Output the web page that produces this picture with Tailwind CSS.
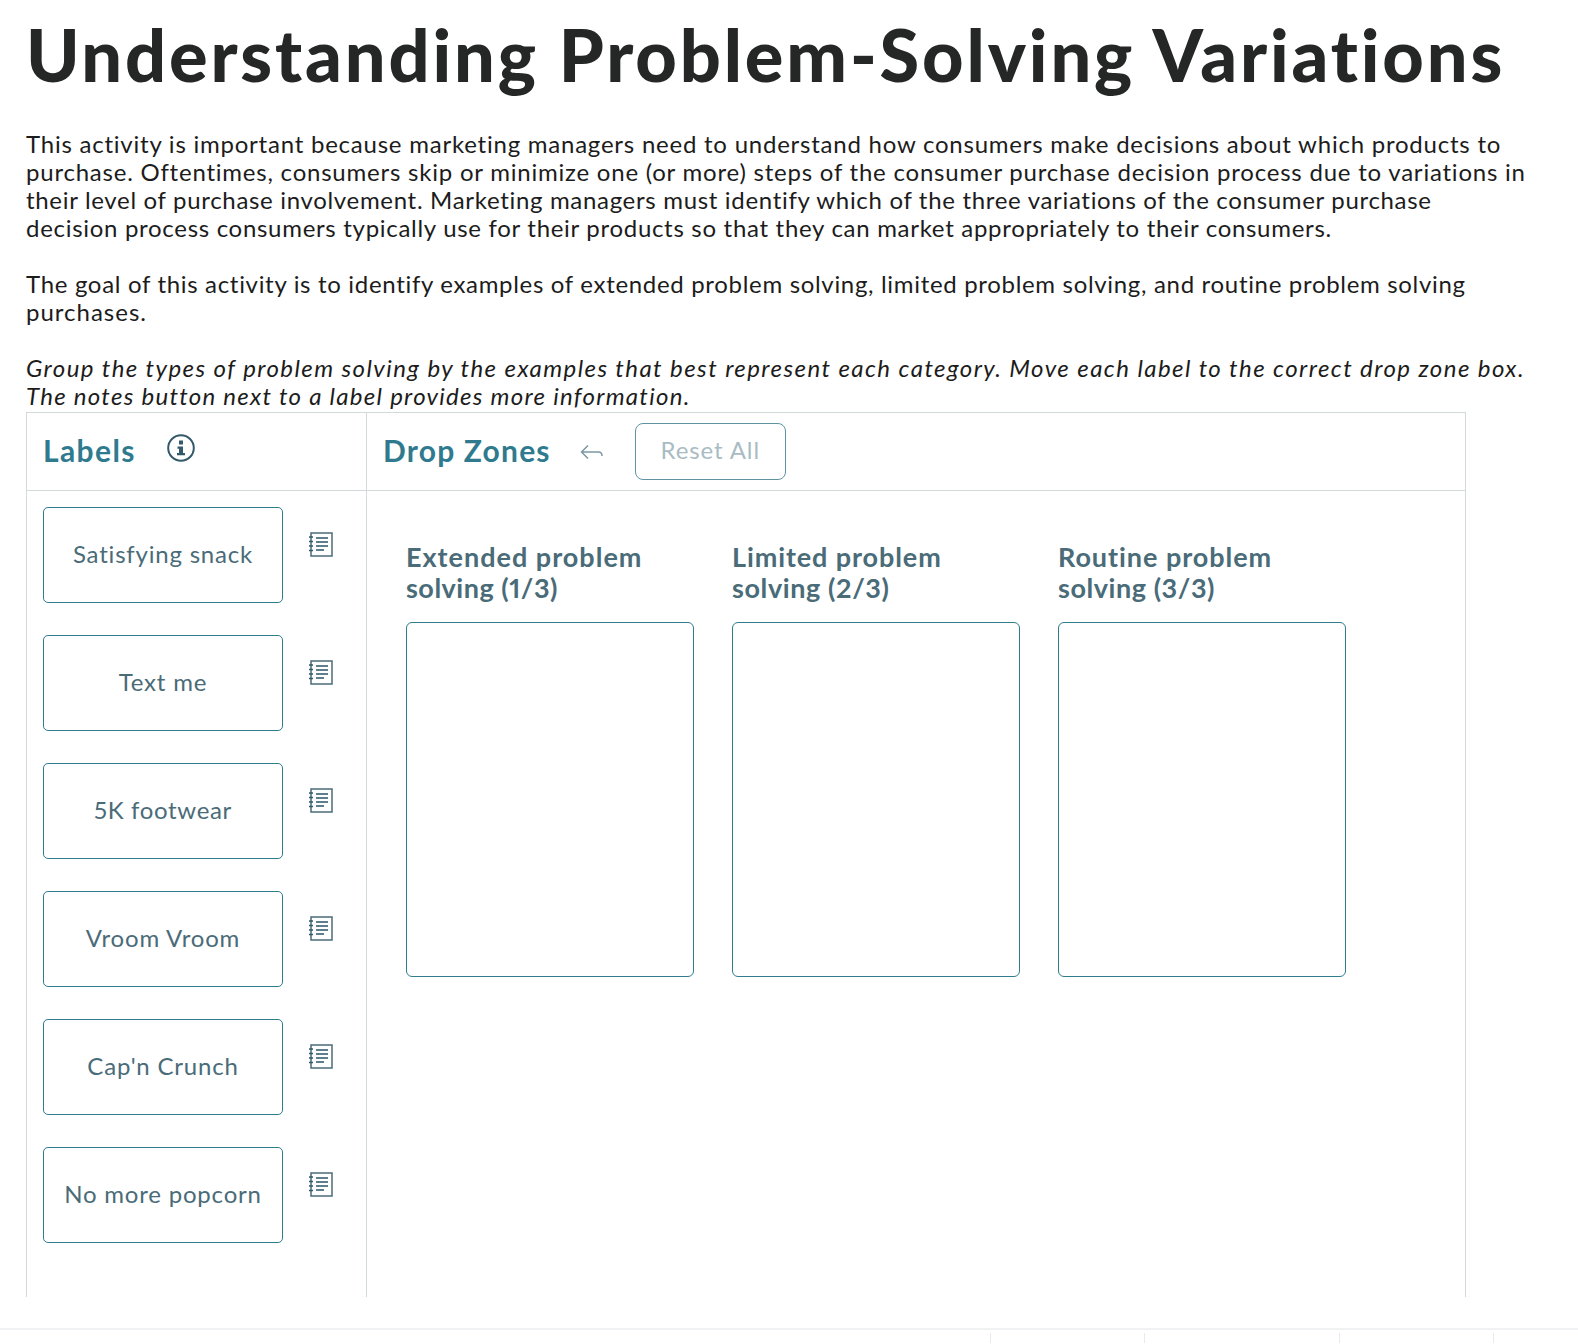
<!DOCTYPE html>
<html lang="en">
<head>
  <meta charset="UTF-8">
  <title>Understanding Problem-Solving Variations</title>
  <script src="https://cdn.jsdelivr.net/npm/@tailwindcss/browser@4"></script>
</head>
<body class="bg-white h-[1344px] overflow-hidden font-['Lato','Open_Sans',sans-serif] [font-variant-ligatures:none] proportional-nums text-[#1c1c1c]">
  <div class="pl-[26px] pt-[14px]">
    <h1 class="text-[72px] leading-[80px] font-black tracking-[2.85px] text-[#252727] whitespace-nowrap">Understanding Problem-Solving Variations</h1>

    <div class="mt-[36px] text-[24px] leading-[28px] whitespace-nowrap">
      <p>
        <span class="block tracking-[0.77px]">This activity is important because marketing managers need to understand how consumers make decisions about which products to</span>
        <span class="block tracking-[0.78px]">purchase. Oftentimes, consumers skip or minimize one (or more) steps of the consumer purchase decision process due to variations in</span>
        <span class="block tracking-[0.68px]">their level of purchase involvement. Marketing managers must identify which of the three variations of the consumer purchase</span>
        <span class="block tracking-[0.7px]">decision process consumers typically use for their products so that they can market appropriately to their consumers.</span>
      </p>
      <p class="mt-[28px]">
        <span class="block tracking-[0.68px]">The goal of this activity is to identify examples of extended problem solving, limited problem solving, and routine problem solving</span>
        <span class="block tracking-[1px]">purchases.</span>
      </p>
      <p class="mt-[28px] italic">
        <span class="block tracking-[1.43px]">Group the types of problem solving by the examples that best represent each category. Move each label to the correct drop zone box.</span>
        <span class="block tracking-[1.28px]">The notes button next to a label provides more information.</span>
      </p>
    </div>

    <div class="mt-[2px] w-[1440px] h-[885px] border-x border-t border-[#d3dadc] grid grid-cols-[340px_1fr] grid-rows-[78px_1fr]">
      <div class="border-r border-b border-[#d3dadc] flex items-center pl-[16px]">
        <h2 class="text-[30px] font-bold tracking-[1.4px] text-[#2f7a8e] pb-[3px]">Labels</h2>
        <svg class="ml-[31px] -mt-[8px]" width="28" height="28" viewBox="0 0 28 28" fill="none">
          <circle cx="14" cy="14" r="12.8" stroke="#33596a" stroke-width="2"/>
          <rect x="12" y="6.500" width="4" height="4" fill="#33596a"/>
          <path d="M10.500 12.500h5.500v6.500h2v2.200h-8v-2.200h2v-4.300h-1.500z" fill="#33596a"/>
        </svg>
      </div>
      <div class="border-b border-[#d3dadc] flex items-center pl-[16px]">
        <h2 class="text-[30px] font-bold tracking-[1.2px] text-[#2f7a8e] pb-[3px]">Drop Zones</h2>
        <svg class="ml-[29px]" width="24" height="16" viewBox="0 0 24 16" fill="none" stroke="#7c98a3" stroke-width="1.500">
          <path d="M8 1.500L1.500 8l6.500 6.500M1.500 8h17c2.500 0 3.500 1.500 3.500 4"/>
        </svg>
        <button class="ml-[31px] w-[151px] h-[57px] border border-[#5f93a3] rounded-[8px] text-[24px] tracking-[0.9px] text-[#a9bcc3] pb-[4px]">Reset All</button>
      </div>

      <div class="border-r border-[#d3dadc] pl-[16px] pt-[16px] flex flex-col gap-[32px]">
        <div class="flex items-start">
          <div class="w-[240px] h-[96px] pb-[2px] border border-[#2f7d8c] rounded-[5px] flex items-center justify-center text-[24px] tracking-[0.8px] text-[#4a6b78]">Satisfying snack</div>
          <svg class="ml-[25px] mt-[25px]" width="25" height="25" viewBox="0 0 25 25" fill="none"><rect x="3" y="1" width="21" height="23" stroke="#4a6b78" stroke-width="1.500"/><path d="M1 5h4M1 9.500h4M1 14h4M1 18.500h4" stroke="#33596a" stroke-width="1.500"/><path d="M8 6h12M8 10h12M8 14h12M8 18h8" stroke="#5f7f8c" stroke-width="2"/></svg>
        </div>
        <div class="flex items-start">
          <div class="w-[240px] h-[96px] pb-[2px] border border-[#2f7d8c] rounded-[5px] flex items-center justify-center text-[24px] tracking-[0.8px] text-[#4a6b78]">Text me</div>
          <svg class="ml-[25px] mt-[25px]" width="25" height="25" viewBox="0 0 25 25" fill="none"><rect x="3" y="1" width="21" height="23" stroke="#4a6b78" stroke-width="1.500"/><path d="M1 5h4M1 9.500h4M1 14h4M1 18.500h4" stroke="#33596a" stroke-width="1.500"/><path d="M8 6h12M8 10h12M8 14h12M8 18h8" stroke="#5f7f8c" stroke-width="2"/></svg>
        </div>
        <div class="flex items-start">
          <div class="w-[240px] h-[96px] pb-[2px] border border-[#2f7d8c] rounded-[5px] flex items-center justify-center text-[24px] tracking-[0.65px] text-[#4a6b78]">5K footwear</div>
          <svg class="ml-[25px] mt-[25px]" width="25" height="25" viewBox="0 0 25 25" fill="none"><rect x="3" y="1" width="21" height="23" stroke="#4a6b78" stroke-width="1.500"/><path d="M1 5h4M1 9.500h4M1 14h4M1 18.500h4" stroke="#33596a" stroke-width="1.500"/><path d="M8 6h12M8 10h12M8 14h12M8 18h8" stroke="#5f7f8c" stroke-width="2"/></svg>
        </div>
        <div class="flex items-start">
          <div class="w-[240px] h-[96px] pb-[2px] border border-[#2f7d8c] rounded-[5px] flex items-center justify-center text-[24px] tracking-[0.8px] text-[#4a6b78]">Vroom Vroom</div>
          <svg class="ml-[25px] mt-[25px]" width="25" height="25" viewBox="0 0 25 25" fill="none"><rect x="3" y="1" width="21" height="23" stroke="#4a6b78" stroke-width="1.500"/><path d="M1 5h4M1 9.500h4M1 14h4M1 18.500h4" stroke="#33596a" stroke-width="1.500"/><path d="M8 6h12M8 10h12M8 14h12M8 18h8" stroke="#5f7f8c" stroke-width="2"/></svg>
        </div>
        <div class="flex items-start">
          <div class="w-[240px] h-[96px] pb-[2px] border border-[#2f7d8c] rounded-[5px] flex items-center justify-center text-[24px] tracking-[0.8px] text-[#4a6b78]">Cap'n Crunch</div>
          <svg class="ml-[25px] mt-[25px]" width="25" height="25" viewBox="0 0 25 25" fill="none"><rect x="3" y="1" width="21" height="23" stroke="#4a6b78" stroke-width="1.500"/><path d="M1 5h4M1 9.500h4M1 14h4M1 18.500h4" stroke="#33596a" stroke-width="1.500"/><path d="M8 6h12M8 10h12M8 14h12M8 18h8" stroke="#5f7f8c" stroke-width="2"/></svg>
        </div>
        <div class="flex items-start">
          <div class="w-[240px] h-[96px] pb-[2px] border border-[#2f7d8c] rounded-[5px] flex items-center justify-center text-[24px] tracking-[0.8px] text-[#4a6b78]">No more popcorn</div>
          <svg class="ml-[25px] mt-[25px]" width="25" height="25" viewBox="0 0 25 25" fill="none"><rect x="3" y="1" width="21" height="23" stroke="#4a6b78" stroke-width="1.500"/><path d="M1 5h4M1 9.500h4M1 14h4M1 18.500h4" stroke="#33596a" stroke-width="1.500"/><path d="M8 6h12M8 10h12M8 14h12M8 18h8" stroke="#5f7f8c" stroke-width="2"/></svg>
        </div>
      </div>

      <div class="pl-[39px] pt-[50px] flex items-start gap-[38px]">
        <div class="w-[288px]">
          <h3 class="text-[27px] leading-[31px] font-bold text-[#4a6b78] whitespace-nowrap"><span class="block tracking-[1px]">Extended problem</span><span class="block tracking-[0.5px]">solving (1/3)</span></h3>
          <div class="mt-[19px] h-[355px] border border-[#2f7d8c] rounded-[6px]"></div>
        </div>
        <div class="w-[288px]">
          <h3 class="text-[27px] leading-[31px] font-bold text-[#4a6b78] whitespace-nowrap"><span class="block tracking-[0.9px]">Limited problem</span><span class="block tracking-[0.6px]">solving (2/3)</span></h3>
          <div class="mt-[19px] h-[355px] border border-[#2f7d8c] rounded-[6px]"></div>
        </div>
        <div class="w-[288px]">
          <h3 class="text-[27px] leading-[31px] font-bold text-[#4a6b78] whitespace-nowrap"><span class="block tracking-[0.95px]">Routine problem</span><span class="block tracking-[0.55px]">solving (3/3)</span></h3>
          <div class="mt-[19px] h-[355px] border border-[#2f7d8c] rounded-[6px]"></div>
        </div>
      </div>
    </div>
  </div>

  <footer class="mt-[31px] border-t-2 border-[#f0f1f2] pt-[3px] flex h-[15px]">
    <span class="ml-[990px] w-px h-full bg-[#e8eaeb]"></span>
    <span class="ml-[153px] w-px h-full bg-[#e8eaeb]"></span>
    <span class="ml-[194px] w-px h-full bg-[#e8eaeb]"></span>
    <span class="ml-[153px] w-px h-full bg-[#e8eaeb]"></span>
  </footer>
</body>
</html>
